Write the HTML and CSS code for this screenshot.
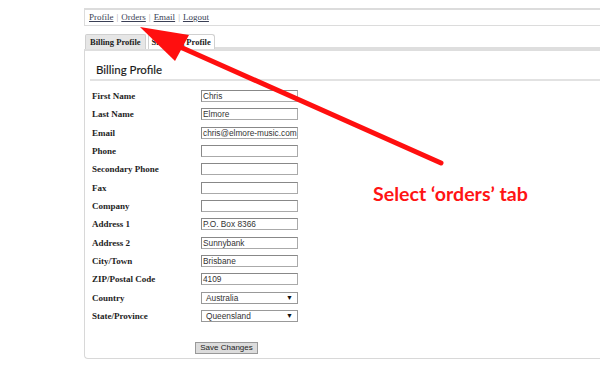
FILE: index.html
```html
<!DOCTYPE html>
<html>
<head>
<meta charset="utf-8">
<link rel="stylesheet" href="styles.css">
</head>
<body>
<div class="page">
  <div class="navbar">
    <a href="#">Profile</a><span class="sep">|</span><a href="#">Orders</a><span class="sep">|</span><a href="#">Email</a><span class="sep">|</span><a href="#">Logout</a>
  </div>
  <div class="tabs">
    <div class="tab active">Billing Profile</div>
    <div class="tab">Shipping Profile</div>
    <div class="tab-fill"></div>
  </div>
  <div class="panel">
    <h2 class="heading">Billing Profile</h2>
    <div class="form">
      <label>First Name</label><div class="field">Chris</div>
      <label>Last Name</label><div class="field">Elmore</div>
      <label>Email</label><div class="field">chris@elmore-music.com</div>
      <label>Phone</label><div class="field"></div>
      <label>Secondary Phone</label><div class="field"></div>
      <label>Fax</label><div class="field"></div>
      <label>Company</label><div class="field"></div>
      <label>Address 1</label><div class="field">P.O. Box 8366</div>
      <label>Address 2</label><div class="field">Sunnybank</div>
      <label>City/Town</label><div class="field">Brisbane</div>
      <label>ZIP/Postal Code</label><div class="field">4109</div>
      <label>Country</label><div class="field select"><span>Australia</span><span class="caret">▼</span></div>
      <label>State/Province</label><div class="field select"><span>Queensland</span><span class="caret">▼</span></div>
    </div>
    <div class="actions"><button class="save">Save Changes</button></div>
  </div>
</div>
<div class="annotation">
  <svg class="arrow" width="600" height="383" viewBox="0 0 600 383">
    <line x1="441" y1="163" x2="178" y2="46" stroke="#ff0f0f" stroke-width="5" stroke-linecap="round"/>
    <polygon points="140,27 189,35 175,61" fill="#ff0f0f"/>
  </svg>
  <div class="callout">Select ‘orders’ tab</div>
</div>
</body>
</html>
```

FILE: styles.css
```css
html, body {
  margin: 0;
  padding: 0;
  background: #fff;
  overflow: hidden;
  width: 600px;
  height: 383px;
}
body {
  position: relative;
  font-family: "Liberation Serif", "Times New Roman", serif;
  color: #222;
}
.page {
  margin-left: 84px;
  padding-top: 8px;
  width: 516px;
}
.navbar {
  border: 1px solid #dcdcdc;
  border-right: none;
  border-top-width: 2px;
  height: 15px;
  font-size: 9px;
  line-height: 15px;
  padding-left: 4px;
  display: flex;
  align-items: center;
}
.navbar a {
  color: #3a3f55;
  text-decoration: underline;
}
.navbar .sep {
  color: #aaa;
  margin: 0 3px;
}
.tabs {
  display: flex;
  margin-top: 7px;
  height: 16px;
  align-items: flex-end;
}
.tab {
  height: 14px;
  border: 1px solid #d0d0d0;
  border-bottom: none;
  border-radius: 0 3px 0 0;
  font-size: 8.5px;
  font-weight: bold;
  line-height: 15px;
  padding: 0 3px;
  color: #222;
  background: #fff;
  margin-left: 2px;
}
.tab.active {
  background: #e6e6e6;
  margin-left: 1px;
  padding: 0 4px;
  border-radius: 2px 2px 0 0;
}
.tab-fill {
  flex: 1;
  height: 0;
  border-bottom: 2px solid #dedede;
}
.panel {
  border: 1px solid #d8d8d8;
  border-right: none;
  border-top: 2px solid #dedede;
  border-radius: 0 0 0 4px;
  height: 307px;
  padding: 0 0 0 7px;
}
.heading {
  margin: 0 0 0 -2px;
  padding: 13px 0 4px 6px;
  font-family: Lato, "Open Sans", sans-serif;
  font-size: 11.5px;
  font-weight: normal;
  color: #1a1a1a;
  border-bottom: 2px solid #e2e2e2;
  line-height: 11px;
  -webkit-text-stroke: 0.15px #1a1a1a;
}
.form {
  display: grid;
  grid-template-columns: 109px 97px;
  grid-auto-rows: 12px;
  row-gap: 6.33px;
  margin-top: 9px;
  align-items: center;
}
.form label {
  font-size: 9px;
  font-weight: bold;
  color: #1e1e1e;
  line-height: 12px;
}
.field {
  box-sizing: border-box;
  height: 12px;
  border: 1px solid #aaa;
  border-top-color: #888;
  border-left-color: #888;
  font-family: "Liberation Sans", Arial, sans-serif;
  font-size: 8.3px;
  line-height: 10px;
  padding-left: 1px;
  color: #333;
  background: #fff;
  white-space: nowrap;
  overflow: hidden;
}
.field.select {
  display: flex;
  justify-content: space-between;
  padding: 0 4px 0 4px;
  border: 1px solid #999;
}
.field .caret {
  font-size: 7px;
  color: #111;
}
.actions {
  margin-top: 14px;
  padding-left: 103px;
}
.save {
  height: 12px;
  padding: 0 4px;
  font-family: "Liberation Sans", Arial, sans-serif;
  font-size: 8px;
  line-height: 10px;
  color: #222;
  background: #dcdcdc;
  border: 1px solid #999;
  border-radius: 0;
  width: 63px;
}
.annotation {
  position: absolute;
  left: 0;
  top: 0;
  width: 600px;
  height: 383px;
  pointer-events: none;
}
.arrow {
  position: absolute;
  left: 0;
  top: 0;
}
.callout {
  position: absolute;
  left: 373px;
  top: 182px;
  font-family: Lato, "Open Sans", sans-serif;
  font-weight: bold;
  font-size: 19.6px;
  color: #ff1414;
  white-space: nowrap;
}
```
